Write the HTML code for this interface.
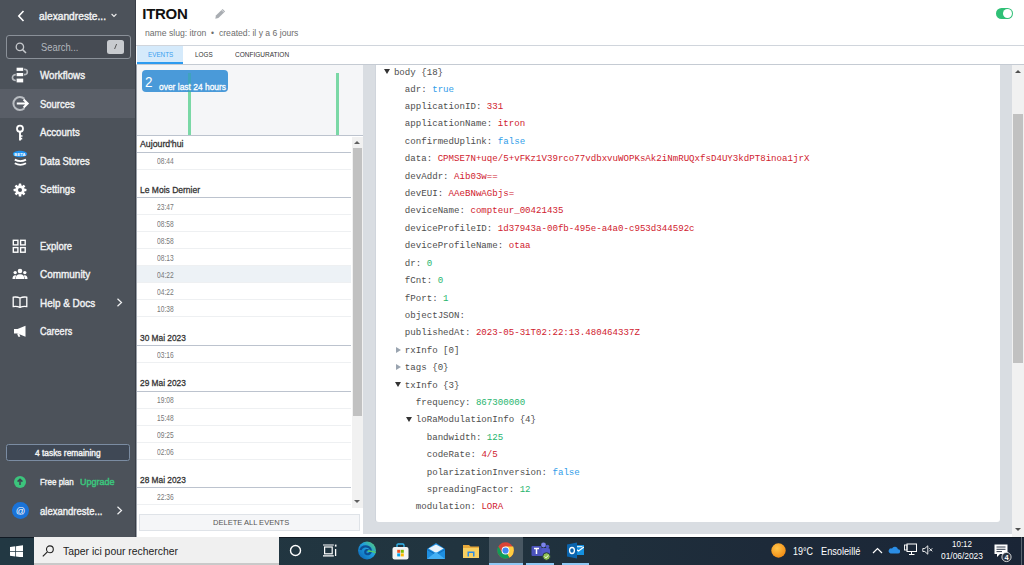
<!DOCTYPE html>
<html><head><meta charset="utf-8"><style>
*{margin:0;padding:0;box-sizing:border-box}
html,body{width:1024px;height:565px;overflow:hidden;background:#fff;font-family:"Liberation Sans",sans-serif}
.a{position:absolute;white-space:nowrap}
.x{position:absolute;white-space:nowrap;transform-origin:0 0}
.mono{position:absolute;white-space:nowrap;font-family:"Liberation Mono",monospace;font-size:9.12px;line-height:12px;color:#4e4e4e}
.s{color:#d0212e}.n{color:#27b56e}.b{color:#2f9de9}
.td{position:absolute;width:0;height:0;border-left:3.9px solid transparent;border-right:3.9px solid transparent;border-top:5.2px solid #333}
.tr{position:absolute;width:0;height:0;border-top:3.7px solid transparent;border-bottom:3.7px solid transparent;border-left:5px solid #9aa4b0}
</style></head><body>
<div class="a" style="left:0px;top:0px;width:136px;height:537px;background:#4c525a;"></div>
<div class="a" style="left:135px;top:0px;width:1px;height:537px;background:#393e47;"></div>
<div class="a" style="left:136px;top:65px;width:1px;height:472px;background:#9aa0a8;"></div>
<div class="a" style="left:0px;top:89px;width:135px;height:29px;background:#595e67;"></div>
<svg class="a" style="left:16.5px;top:10px" width="8" height="12" viewBox="0 0 8 12"><path d="M6.5 1 L1.8 6 L6.5 11" stroke="#fff" stroke-width="1.6" fill="none"/></svg>
<div class="x" style="left:39px;top:8.5px;font-size:11px;line-height:14.3px;color:#f2f3f4;font-weight:normal;transform:scaleX(0.929);-webkit-text-stroke:0.4px #f2f3f4;">alexandreste...</div>
<svg class="a" style="left:111px;top:13px" width="6" height="5" viewBox="0 0 6 5"><path d="M0.6 1 L3 3.4 L5.4 1" stroke="#eee" stroke-width="1.1" fill="none"/></svg>
<div class="a" style="left:5.5px;top:35px;width:125px;height:23.5px;background:#464b53;border:1.8px solid #8a9098;border-radius:3px;"></div>
<svg class="a" style="left:15px;top:42px" width="12" height="12" viewBox="0 0 12 12"><circle cx="4.9" cy="4.9" r="3.7" stroke="#c5c8cc" stroke-width="1.3" fill="none"/><path d="M7.6 7.6 L11 11" stroke="#c5c8cc" stroke-width="1.5"/></svg>
<div class="x" style="left:40.5px;top:40.8px;font-size:10.5px;line-height:13.65px;color:#b4b8be;font-weight:normal;transform:scaleX(0.89);">Search...</div>
<div class="a" style="left:107px;top:39.5px;width:17px;height:14px;background:#c8cbcf;border-radius:2.5px;"></div>
<svg class="a" style="left:112px;top:43px" width="7" height="7" viewBox="0 0 7 7"><path d="M4.6 1 L2.6 6" stroke="#555" stroke-width="1"/></svg>
<div class="x" style="left:39.5px;top:68.3px;font-size:11px;line-height:14.3px;color:#f2f3f4;font-weight:normal;transform:scaleX(0.893);-webkit-text-stroke:0.4px #f2f3f4;">Workflows</div>
<div class="x" style="left:39.5px;top:96.8px;font-size:11px;line-height:14.3px;color:#f2f3f4;font-weight:normal;transform:scaleX(0.859);-webkit-text-stroke:0.4px #f2f3f4;">Sources</div>
<div class="x" style="left:39.5px;top:125.2px;font-size:11px;line-height:14.3px;color:#f2f3f4;font-weight:normal;transform:scaleX(0.879);-webkit-text-stroke:0.4px #f2f3f4;">Accounts</div>
<div class="x" style="left:39.5px;top:153.6px;font-size:11px;line-height:14.3px;color:#f2f3f4;font-weight:normal;transform:scaleX(0.858);-webkit-text-stroke:0.4px #f2f3f4;">Data Stores</div>
<div class="x" style="left:39.5px;top:182px;font-size:11px;line-height:14.3px;color:#f2f3f4;font-weight:normal;transform:scaleX(0.883);-webkit-text-stroke:0.4px #f2f3f4;">Settings</div>
<div class="x" style="left:39.5px;top:239px;font-size:11px;line-height:14.3px;color:#f2f3f4;font-weight:normal;transform:scaleX(0.86);-webkit-text-stroke:0.4px #f2f3f4;">Explore</div>
<div class="x" style="left:39.5px;top:267.4px;font-size:11px;line-height:14.3px;color:#f2f3f4;font-weight:normal;transform:scaleX(0.905);-webkit-text-stroke:0.4px #f2f3f4;">Community</div>
<div class="x" style="left:39.5px;top:295.7px;font-size:11px;line-height:14.3px;color:#f2f3f4;font-weight:normal;transform:scaleX(0.904);-webkit-text-stroke:0.4px #f2f3f4;">Help &amp; Docs</div>
<div class="x" style="left:39.5px;top:324.2px;font-size:11px;line-height:14.3px;color:#f2f3f4;font-weight:normal;transform:scaleX(0.8225);-webkit-text-stroke:0.4px #f2f3f4;">Careers</div>
<svg class="a" style="left:116px;top:298px" width="7" height="9" viewBox="0 0 7 9"><path d="M1.5 0.8 L5.5 4.5 L1.5 8.2" stroke="#f2f3f4" stroke-width="1.2" fill="none"/></svg>
<div class="a" style="left:6px;top:444px;width:124px;height:17px;background:#3f4855;border:1.5px solid #7b8ca2;border-radius:2.5px;"></div>
<div class="x" style="left:34.7px;top:448px;font-size:9px;line-height:11.7px;color:#f2f3f4;font-weight:normal;transform:scaleX(0.93);-webkit-text-stroke:0.4px #f2f3f4;">4 tasks remaining</div>
<div class="a" style="left:14px;top:476px;width:12px;height:12px;background:#3cc47c;border-radius:6px;"></div>
<svg class="a" style="left:14px;top:476px" width="12" height="12" viewBox="0 0 12 12"><path d="M6 9 V3.5 M3.6 5.6 L6 3.2 L8.4 5.6" stroke="#3e4550" stroke-width="1.5" fill="none"/></svg>
<div class="x" style="left:39.8px;top:476px;font-size:9.5px;line-height:12.35px;color:#f2f3f4;font-weight:normal;transform:scaleX(0.84);-webkit-text-stroke:0.4px #f2f3f4;">Free plan</div>
<div class="x" style="left:80.3px;top:476px;font-size:9.5px;line-height:12.35px;color:#3cc47c;font-weight:normal;transform:scaleX(0.944);-webkit-text-stroke:0.5px #3cc47c;">Upgrade</div>
<div class="a" style="left:12px;top:502px;width:16.5px;height:16.5px;background:#1a73d8;border-radius:9px;"></div>
<div class="x" style="left:15.8px;top:504.5px;font-size:9.5px;line-height:12.35px;color:#fff;font-weight:normal;">@</div>
<div class="x" style="left:39.8px;top:503.5px;font-size:11px;line-height:14.3px;color:#f2f3f4;font-weight:normal;transform:scaleX(0.865);-webkit-text-stroke:0.4px #f2f3f4;">alexandreste...</div>
<svg class="a" style="left:116px;top:506px" width="7" height="9" viewBox="0 0 7 9"><path d="M1.5 0.8 L5.5 4.5 L1.5 8.2" stroke="#f2f3f4" stroke-width="1.2" fill="none"/></svg>
<svg class="a" style="left:10px;top:66px" width="20" height="18" viewBox="0 0 20 18"><rect x="6.6" y="1.7" width="6.6" height="3.2" fill="#fff"/><rect x="6.6" y="7" width="6.6" height="3.2" fill="#fff"/><rect x="6.6" y="12.6" width="6.6" height="3.8" fill="#fff"/><path d="M14 3.3 C18.5 3.3 18.5 8.6 14 8.6" stroke="#b5b9be" stroke-width="1.6" fill="none"/><path d="M5.8 8.6 C1.3 8.6 1.3 14.5 5.8 14.5" stroke="#b5b9be" stroke-width="1.6" fill="none"/></svg>
<svg class="a" style="left:11px;top:95px" width="19" height="17" viewBox="0 0 19 17"><path d="M13.4 3.8 A6.5 6.5 0 1 0 13.4 13.2" stroke="#b9bdc2" stroke-width="2" fill="none"/><path d="M5.8 8.5 H16.3 M12.6 4.6 L16.6 8.5 L12.6 12.4" stroke="#fff" stroke-width="2.1" fill="none"/></svg>
<svg class="a" style="left:14px;top:124px" width="12" height="18" viewBox="0 0 12 18"><circle cx="6" cy="4.7" r="3" stroke="#fff" stroke-width="1.8" fill="none"/><path d="M6 7.5 V16.5" stroke="#fff" stroke-width="1.9"/><path d="M6 12 H8.5 M6 14.6 H8.2" stroke="#fff" stroke-width="1.6"/></svg>
<svg class="a" style="left:12px;top:150px" width="16" height="18" viewBox="0 0 16 18"><path d="M2.8 9.6 Q8.4 12.8 14 9.6" stroke="#fff" stroke-width="1.8" fill="none"/><path d="M2.8 13.2 Q8.4 16.4 14 13.2" stroke="#fff" stroke-width="1.8" fill="none"/><ellipse cx="8" cy="4" rx="7.2" ry="3.3" fill="#1f93f2"/><text x="8" y="5.6" font-size="4.3" font-family="Liberation Sans" font-weight="bold" fill="#fff" text-anchor="middle">BETA</text></svg>
<svg class="a" style="left:13px;top:182.5px" width="14" height="14" viewBox="0 0 14 14"><g fill="#fff"><circle cx="7" cy="7" r="4.7"/><rect x="5.7" y="0.6" width="2.6" height="12.8" rx="0.5"/><rect x="5.7" y="0.6" width="2.6" height="12.8" rx="0.5" transform="rotate(45 7 7)"/><rect x="5.7" y="0.6" width="2.6" height="12.8" rx="0.5" transform="rotate(90 7 7)"/><rect x="5.7" y="0.6" width="2.6" height="12.8" rx="0.5" transform="rotate(135 7 7)"/></g><circle cx="7" cy="7" r="2" fill="#4c525a"/></svg>
<svg class="a" style="left:12px;top:239px" width="15" height="15" viewBox="0 0 15 15"><g stroke="#fff" stroke-width="1.4" fill="none"><rect x="1.3" y="1.3" width="4.6" height="4.6"/><rect x="8.6" y="1.3" width="4.6" height="4.6"/><rect x="1.3" y="8.6" width="4.6" height="4.6"/><rect x="8.6" y="8.6" width="4.6" height="4.6"/></g></svg>
<svg class="a" style="left:12px;top:268px" width="16" height="12" viewBox="0 0 16 12"><g fill="#fff"><circle cx="8" cy="3" r="2.3"/><circle cx="3.2" cy="4.6" r="1.7"/><circle cx="12.8" cy="4.6" r="1.7"/><path d="M3.5 11 Q3.5 6.2 8 6.2 Q12.5 6.2 12.5 11 Z"/><path d="M0.5 11 Q0.5 7.3 3.2 7.3 Q4.5 7.3 4.2 8 Q3 9 3 11 Z"/><path d="M15.5 11 Q15.5 7.3 12.8 7.3 Q11.5 7.3 11.8 8 Q13 9 13 11 Z"/></g></svg>
<svg class="a" style="left:12px;top:296px" width="16" height="13" viewBox="0 0 16 13"><path d="M8 2 Q5 0.6 1.2 1.2 V10.6 Q5 10 8 11.4 Q11 10 14.8 10.6 V1.2 Q11 0.6 8 2 Z M8 2 V11.4" stroke="#fff" stroke-width="1.3" fill="none"/></svg>
<svg class="a" style="left:13px;top:325px" width="14" height="13" viewBox="0 0 14 13"><path d="M1 4 H4.5 L12.5 0.8 V11.8 L4.5 8.6 H1 Z" fill="#fff"/><path d="M4 8.6 L5.3 11.8 H7.3 L6.3 8.9" fill="#fff"/></svg>
<div class="x" style="left:142.3px;top:3.7px;font-size:15px;line-height:19.5px;color:#111;font-weight:bold;letter-spacing:-0.3px;">ITRON</div>
<svg class="a" style="left:215px;top:8px" width="11" height="11" viewBox="0 0 11 11"><path d="M0.3 10.7 L0.9 7.6 L7.6 0.9 L10.1 3.4 L3.4 10.1 Z" fill="#a9adb2"/><path d="M6.6 1.9 L9.1 4.4" stroke="#fff" stroke-width="0.6"/></svg>
<div class="x" style="left:145px;top:28px;font-size:8.7px;line-height:11.31px;color:#6d6d6d;font-weight:normal;transform:scaleX(0.992);">name slug: itron &nbsp;•&nbsp; created: il y a 6 jours</div>
<div class="a" style="left:995.5px;top:8px;width:17.5px;height:11px;background:#2fc076;border-radius:6px;"></div>
<div class="a" style="left:1002.8px;top:9px;width:9px;height:9px;background:#fff;border-radius:5px;"></div>
<div class="a" style="left:136px;top:45px;width:888px;height:1px;background:#d0d5dc;"></div>
<div class="a" style="left:137px;top:46px;width:46px;height:16.5px;background:#d5eafb;"></div>
<div class="a" style="left:137px;top:62px;width:46px;height:2px;background:#2d9bf0;"></div>
<div class="a" style="left:136px;top:64px;width:888px;height:1px;background:#c5cbd3;"></div>
<div class="x" style="left:147.6px;top:49.8px;font-size:7.6px;line-height:9.88px;color:#3a9ff0;font-weight:normal;transform:scaleX(0.83);">EVENTS</div>
<div class="x" style="left:195.3px;top:49.8px;font-size:7.6px;line-height:9.88px;color:#333;font-weight:normal;transform:scaleX(0.835);">LOGS</div>
<div class="x" style="left:235.2px;top:49.8px;font-size:7.6px;line-height:9.88px;color:#333;font-weight:normal;transform:scaleX(0.857);">CONFIGURATION</div>
<div class="a" style="left:137px;top:65px;width:226px;height:70.5px;background:#f5f6f8;"></div>
<div class="a" style="left:137px;top:135px;width:226px;height:1px;background:#bcc3ce;"></div>
<div class="a" style="left:142px;top:70.3px;width:86.3px;height:22px;background:#4a9ad9;border-radius:4px;"></div>
<div class="a" style="left:188.3px;top:92.3px;width:2.8px;height:43px;background:#7ad8a6;"></div>
<div class="a" style="left:188.3px;top:73px;width:2.8px;height:19.3px;background:#3fa3bd;"></div>
<div class="a" style="left:336.3px;top:73px;width:2.8px;height:62px;background:#7ad8a6;"></div>
<div class="x" style="left:145.2px;top:72.3px;font-size:15px;line-height:19.5px;color:#fff;font-weight:normal;transform:scaleX(0.9);">2</div>
<div class="x" style="left:159px;top:80.5px;font-size:9.5px;line-height:12.35px;color:#fff;font-weight:normal;transform:scaleX(0.888);-webkit-text-stroke:0.3px #fff;">over last 24 hours</div>
<div class="a" style="left:137px;top:136px;width:226px;height:401px;background:#fff;"></div>
<div class="x" style="left:139.7px;top:138.4px;font-size:9.5px;line-height:12.35px;color:#333;font-weight:normal;transform:scaleX(0.921);-webkit-text-stroke:0.3px #333;">Aujourd&#39;hui</div>
<div class="a" style="left:137px;top:151.8px;width:214px;height:1px;background:#bcc3ce;"></div>
<div class="x" style="left:156.6px;top:157px;font-size:8.2px;line-height:10.66px;color:#777;font-weight:normal;transform:scaleX(0.81);">08:44</div>
<div class="a" style="left:137px;top:168.85px;width:214px;height:1px;background:#eef0f2;"></div>
<div class="x" style="left:139.7px;top:183.8px;font-size:9.5px;line-height:12.35px;color:#333;font-weight:normal;transform:scaleX(0.895);-webkit-text-stroke:0.3px #333;">Le Mois Dernier</div>
<div class="a" style="left:137px;top:197.1px;width:214px;height:1px;background:#bcc3ce;"></div>
<div class="x" style="left:156.6px;top:203px;font-size:8.2px;line-height:10.66px;color:#777;font-weight:normal;transform:scaleX(0.81);">23:47</div>
<div class="a" style="left:137px;top:214.15px;width:214px;height:1px;background:#eef0f2;"></div>
<div class="x" style="left:156.6px;top:220px;font-size:8.2px;line-height:10.66px;color:#777;font-weight:normal;transform:scaleX(0.81);">08:58</div>
<div class="a" style="left:137px;top:231.2px;width:214px;height:1px;background:#eef0f2;"></div>
<div class="x" style="left:156.6px;top:237px;font-size:8.2px;line-height:10.66px;color:#777;font-weight:normal;transform:scaleX(0.81);">08:58</div>
<div class="a" style="left:137px;top:248.25px;width:214px;height:1px;background:#eef0f2;"></div>
<div class="x" style="left:156.6px;top:254px;font-size:8.2px;line-height:10.66px;color:#777;font-weight:normal;transform:scaleX(0.81);">08:13</div>
<div class="a" style="left:137px;top:265.3px;width:214px;height:1px;background:#eef0f2;"></div>
<div class="a" style="left:137px;top:265.8px;width:214px;height:17.05px;background:#edf2f6;"></div>
<div class="x" style="left:156.6px;top:271px;font-size:8.2px;line-height:10.66px;color:#777;font-weight:normal;transform:scaleX(0.81);">04:22</div>
<div class="a" style="left:137px;top:282.35px;width:214px;height:1px;background:#eef0f2;"></div>
<div class="x" style="left:156.6px;top:288px;font-size:8.2px;line-height:10.66px;color:#777;font-weight:normal;transform:scaleX(0.81);">04:22</div>
<div class="a" style="left:137px;top:299.4px;width:214px;height:1px;background:#eef0f2;"></div>
<div class="x" style="left:156.6px;top:305px;font-size:8.2px;line-height:10.66px;color:#777;font-weight:normal;transform:scaleX(0.81);">10:38</div>
<div class="a" style="left:137px;top:316.45px;width:214px;height:1px;background:#eef0f2;"></div>
<div class="x" style="left:139.7px;top:331.6px;font-size:9.5px;line-height:12.35px;color:#333;font-weight:normal;transform:scaleX(0.8775);-webkit-text-stroke:0.3px #333;">30 Mai 2023</div>
<div class="a" style="left:137px;top:345.1px;width:214px;height:1px;background:#bcc3ce;"></div>
<div class="x" style="left:156.6px;top:351px;font-size:8.2px;line-height:10.66px;color:#777;font-weight:normal;transform:scaleX(0.81);">03:16</div>
<div class="a" style="left:137px;top:362.15px;width:214px;height:1px;background:#eef0f2;"></div>
<div class="x" style="left:139.7px;top:376.6px;font-size:9.5px;line-height:12.35px;color:#333;font-weight:normal;transform:scaleX(0.8775);-webkit-text-stroke:0.3px #333;">29 Mai 2023</div>
<div class="a" style="left:137px;top:390.9px;width:214px;height:1px;background:#bcc3ce;"></div>
<div class="x" style="left:156.6px;top:396px;font-size:8.2px;line-height:10.66px;color:#777;font-weight:normal;transform:scaleX(0.81);">19:08</div>
<div class="a" style="left:137px;top:407.95px;width:214px;height:1px;background:#eef0f2;"></div>
<div class="x" style="left:156.6px;top:414px;font-size:8.2px;line-height:10.66px;color:#777;font-weight:normal;transform:scaleX(0.81);">15:48</div>
<div class="a" style="left:137px;top:425.0px;width:214px;height:1px;background:#eef0f2;"></div>
<div class="x" style="left:156.6px;top:431px;font-size:8.2px;line-height:10.66px;color:#777;font-weight:normal;transform:scaleX(0.81);">09:25</div>
<div class="a" style="left:137px;top:442.05px;width:214px;height:1px;background:#eef0f2;"></div>
<div class="x" style="left:156.6px;top:448px;font-size:8.2px;line-height:10.66px;color:#777;font-weight:normal;transform:scaleX(0.81);">02:06</div>
<div class="a" style="left:137px;top:459.1px;width:214px;height:1px;background:#eef0f2;"></div>
<div class="x" style="left:139.7px;top:473.8px;font-size:9.5px;line-height:12.35px;color:#333;font-weight:normal;transform:scaleX(0.8775);-webkit-text-stroke:0.3px #333;">28 Mai 2023</div>
<div class="a" style="left:137px;top:487.2px;width:214px;height:1px;background:#bcc3ce;"></div>
<div class="x" style="left:156.6px;top:493px;font-size:8.2px;line-height:10.66px;color:#777;font-weight:normal;transform:scaleX(0.81);">22:36</div>
<div class="a" style="left:137px;top:504.25px;width:214px;height:1px;background:#eef0f2;"></div>
<div class="a" style="left:352px;top:137px;width:11px;height:371px;background:#f1f1f1;"></div>
<div class="a" style="left:353px;top:148px;width:9px;height:268px;background:#c1c1c1;"></div>
<div class="a" style="left:354px;top:141px;width:0;height:0;border-left:3.5px solid transparent;border-right:3.5px solid transparent;border-bottom:3.5px solid #606060"></div>
<div class="a" style="left:354px;top:500px;width:0;height:0;border-left:3.5px solid transparent;border-right:3.5px solid transparent;border-top:3.5px solid #606060"></div>
<div class="a" style="left:139px;top:514px;width:221.3px;height:16.5px;background:#f5f6f8;border:1px solid #dfe3e8;"></div>
<div class="x" style="left:212.6px;top:517.7px;font-size:8px;line-height:10.4px;color:#555;font-weight:normal;transform:scaleX(0.94);">DELETE ALL EVENTS</div>
<div class="a" style="left:363px;top:65px;width:649px;height:469.3px;background:#d9dde2;"></div>
<div class="a" style="left:376px;top:65px;width:624px;height:456.5px;background:#fff;border-radius:0 0 3px 3px;"></div>
<div class="a" style="left:363px;top:534.3px;width:649px;height:2.7px;background:#fff;"></div>
<div class="a" style="left:374.5px;top:65px;width:1.5px;height:456px;background:#d0d5dc;"></div>
<div class="a" style="left:1012px;top:65px;width:12px;height:472px;background:#f1f1f1;"></div>
<div class="a" style="left:1013px;top:114px;width:9.7px;height:249px;background:#c1c1c1;"></div>
<div class="a" style="left:1014.5px;top:70px;width:0;height:0;border-left:3.5px solid transparent;border-right:3.5px solid transparent;border-bottom:3.5px solid #505050"></div>
<div class="a" style="left:1014.5px;top:528px;width:0;height:0;border-left:3.5px solid transparent;border-right:3.5px solid transparent;border-top:3.5px solid #505050"></div>
<div class="td" style="left:383.80px;top:69.30px"></div>
<div class="mono" style="left:393.90px;top:66.80px">body {18}</div>
<div class="mono" style="left:404.84px;top:83.61px">adr: <span class="b">true</span></div>
<div class="mono" style="left:404.84px;top:101.02px">applicationID: <span class="s">331</span></div>
<div class="mono" style="left:404.84px;top:118.43px">applicationName: <span class="s">itron</span></div>
<div class="mono" style="left:404.84px;top:135.84px">confirmedUplink: <span class="b">false</span></div>
<div class="mono" style="left:404.84px;top:153.25px">data: <span class="s">CPMSE7N+uqe/5+vFKz1V39rco77vdbxvuWOPKsAk2iNmRUQxfsD4UY3kdPT8inoa1jrX</span></div>
<div class="mono" style="left:404.84px;top:170.66px">devAddr: <span class="s">Aib03w==</span></div>
<div class="mono" style="left:404.84px;top:188.07px">devEUI: <span class="s">AAeBNwAGbjs=</span></div>
<div class="mono" style="left:404.84px;top:205.48px">deviceName: <span class="s">compteur_00421435</span></div>
<div class="mono" style="left:404.84px;top:222.89px">deviceProfileID: <span class="s">1d37943a-00fb-495e-a4a0-c953d344592c</span></div>
<div class="mono" style="left:404.84px;top:240.30px">deviceProfileName: <span class="s">otaa</span></div>
<div class="mono" style="left:404.84px;top:257.71px">dr: <span class="n">0</span></div>
<div class="mono" style="left:404.84px;top:275.12px">fCnt: <span class="n">0</span></div>
<div class="mono" style="left:404.84px;top:292.53px">fPort: <span class="n">1</span></div>
<div class="mono" style="left:404.84px;top:309.94px">objectJSON: </div>
<div class="mono" style="left:404.84px;top:327.35px">publishedAt: <span class="s">2023-05-31T02:22:13.480464337Z</span></div>
<div class="tr" style="left:395.84px;top:346.56px"></div>
<div class="mono" style="left:404.84px;top:344.76px">rxInfo [0]</div>
<div class="tr" style="left:395.84px;top:363.97px"></div>
<div class="mono" style="left:404.84px;top:362.17px">tags {0}</div>
<div class="td" style="left:394.74px;top:382.08px"></div>
<div class="mono" style="left:404.84px;top:379.58px">txInfo {3}</div>
<div class="mono" style="left:415.78px;top:396.99px">frequency: <span class="n">867300000</span></div>
<div class="td" style="left:405.68px;top:416.90px"></div>
<div class="mono" style="left:415.78px;top:414.40px">loRaModulationInfo {4}</div>
<div class="mono" style="left:426.72px;top:431.81px">bandwidth: <span class="n">125</span></div>
<div class="mono" style="left:426.72px;top:449.22px">codeRate: <span class="s">4/5</span></div>
<div class="mono" style="left:426.72px;top:466.63px">polarizationInversion: <span class="b">false</span></div>
<div class="mono" style="left:426.72px;top:484.04px">spreadingFactor: <span class="n">12</span></div>
<div class="mono" style="left:415.78px;top:501.45px">modulation: <span class="s">LORA</span></div>
<div class="a" style="left:0px;top:537px;width:1024px;height:28px;background:linear-gradient(90deg,#223843 0%,#21343f 45%,#1d2a39 75%,#1a2536 100%);"></div>
<div class="a" style="left:0px;top:536.5px;width:1024px;height:1px;background:#111a24;"></div>
<svg class="a" style="left:10.3px;top:544.5px" width="13.2" height="12.7" viewBox="0 0 14 13"><path d="M0 1.9 L5.6 1.1 V6.1 H0 Z M6.4 1 L14 0 V6.1 H6.4 Z M0 6.9 H5.6 V11.9 L0 11.1 Z M6.4 6.9 H14 V13 L6.4 12 Z" fill="#fff"/></svg>
<div class="a" style="left:33.7px;top:537px;width:245px;height:27px;background:#f0f0f0;"></div>
<div class="a" style="left:33.7px;top:563.3px;width:245px;height:1.7px;background:#c9c9c9;"></div>
<svg class="a" style="left:42px;top:544.5px" width="13" height="12" viewBox="0 0 13 12"><circle cx="7.9" cy="4.3" r="3.4" stroke="#222" stroke-width="1.1" fill="none"/><path d="M5.4 6.9 L0.8 11.4" stroke="#222" stroke-width="1.2"/></svg>
<div class="x" style="left:62.5px;top:544.5px;font-size:10.5px;line-height:13.65px;color:#222;font-weight:normal;transform:scaleX(0.99);">Taper ici pour rechercher</div>
<svg class="a" style="left:289px;top:544px" width="13" height="13" viewBox="0 0 13 13"><circle cx="6.5" cy="6.5" r="5" stroke="#fff" stroke-width="1.4" fill="none"/></svg>
<svg class="a" style="left:323px;top:544px" width="14" height="13" viewBox="0 0 14 13"><rect x="1.6" y="3" width="7.6" height="6.8" stroke="#fff" stroke-width="1.2" fill="none"/><path d="M0 1 H10.8 M0 11.9 H10.8" stroke="#fff" stroke-width="1.1"/><path d="M12.6 5 V12" stroke="#fff" stroke-width="1.3"/><rect x="11.9" y="0.6" width="1.6" height="2" fill="#fff"/></svg>
<svg class="a" style="left:357.5px;top:541px" width="18" height="19" viewBox="0 0 18 19"><defs><linearGradient id="eg" x1="0" y1="1" x2="1" y2="0"><stop offset="0" stop-color="#0a5fb0"/><stop offset="0.55" stop-color="#1e9de0"/><stop offset="1" stop-color="#5fd36a"/></linearGradient></defs><circle cx="9" cy="9.5" r="9" fill="url(#eg)"/><path d="M2.5 9 C3.5 5.5 7.5 4.5 10.5 6 C13.5 7.5 13.5 11 11.5 12.5 C9.5 14 7 13 7.2 10.8 C7.4 9 9.5 8.6 10.5 9.5" stroke="#0d4f94" stroke-width="2.2" fill="none"/><path d="M9.6 9.9 C14 10 17 11 17.5 12" stroke="#53c96e" stroke-width="1.5" fill="none"/></svg>
<svg class="a" style="left:392px;top:543px" width="17" height="17" viewBox="0 0 17 17"><path d="M5 4 V2.2 Q5 1 6.2 1 H10.8 Q12 1 12 2.2 V4" stroke="#35b8f0" stroke-width="1.3" fill="none"/><rect x="0.5" y="4" width="16" height="12.5" rx="2" fill="#f4f4f4"/><rect x="5.2" y="6.8" width="3" height="3" fill="#f25022"/><rect x="8.8" y="6.8" width="3" height="3" fill="#7fba00"/><rect x="5.2" y="10.4" width="3" height="3" fill="#00a4ef"/><rect x="8.8" y="10.4" width="3" height="3" fill="#ffb900"/></svg>
<svg class="a" style="left:427px;top:543px" width="18" height="16" viewBox="0 0 18 16"><path d="M0 6 L9 0 L18 6 V16 H0 Z" fill="#1e8fe0"/><path d="M0 6 L9 11 L18 6 L18 7 L9 12 L0 7Z" fill="#0f6ab8"/><path d="M1.5 5.5 L9 1.5 L16.5 5.5 L9 10 Z" fill="#e9f3fb"/><path d="M0 16 L9 9 L18 16 Z" fill="#44b0f5"/></svg>
<svg class="a" style="left:463px;top:544px" width="16" height="14" viewBox="0 0 16 14"><path d="M0 1 H6 L7.5 2.5 H16 V14 H0 Z" fill="#e8a93a"/><rect x="0" y="4" width="16" height="10" fill="#f8d061"/><rect x="4.5" y="7.5" width="7" height="5" fill="#2b8ce6"/><rect x="6" y="9" width="4" height="5" fill="#f8d061"/></svg>
<div class="a" style="left:488.5px;top:537px;width:34.5px;height:28px;background:#485762;"></div>
<div class="a" style="left:488.5px;top:563.3px;width:34.5px;height:1.7px;background:#8ec8f4;"></div>
<svg class="a" style="left:497px;top:542px" width="17" height="17" viewBox="0 0 17 17"><circle cx="8.5" cy="8.5" r="8.2" fill="#db4437"/><path d="M8.5 8.5 L1.4 12.6 A8.2 8.2 0 0 0 12.6 15.6 Z" fill="#0f9d58"/><path d="M8.5 8.5 L12.6 15.6 A8.2 8.2 0 0 0 16.7 8.5 L8.5 4.4 Z" fill="#ffcd40"/><path d="M8.5 4.4 H16.2 A8.2 8.2 0 0 1 16.7 8.5 L12.6 15.6 L8.5 8.5Z" fill="#ffcd40"/><path d="M1.4 12.6 A8.2 8.2 0 0 1 1.4 4.4 L5 10.5 Z" fill="#0f9d58"/><circle cx="8.5" cy="8.5" r="3.9" fill="#fff"/><circle cx="8.5" cy="8.5" r="3.1" fill="#4285f4"/></svg>
<div class="a" style="left:526.3px;top:563.3px;width:28px;height:1.7px;background:#8ec8f4;"></div>
<svg class="a" style="left:531px;top:542px" width="20" height="19" viewBox="0 0 20 19"><circle cx="12.5" cy="3" r="2.4" fill="#7b83eb"/><circle cx="16.5" cy="4.5" r="1.8" fill="#5059c9"/><rect x="9" y="6" width="10" height="8" rx="2" fill="#5059c9"/><rect x="0.5" y="4" width="10" height="10" rx="1" fill="#4b53bc"/><path d="M3 6.5 H8 M5.5 6.5 V12" stroke="#fff" stroke-width="1.5"/><circle cx="15.5" cy="14.5" r="3.8" fill="#92c353" stroke="#213540" stroke-width="1"/><path d="M13.8 14.6 L15 15.8 L17.2 13.4" stroke="#fff" stroke-width="1" fill="none"/></svg>
<div class="a" style="left:561.5px;top:563.3px;width:27.5px;height:1.7px;background:#8ec8f4;"></div>
<svg class="a" style="left:567px;top:542px" width="17" height="17" viewBox="0 0 17 17"><rect x="6" y="3" width="11" height="10" fill="#1490df"/><path d="M6 5 L11.5 9 L17 5" stroke="#fff" stroke-width="1.1" fill="none"/><rect x="7.5" y="4.2" width="8" height="1" fill="#fff"/><path d="M0 2.5 L10 0.5 V16.5 L0 14.5 Z" fill="#0a64ad"/><ellipse cx="5" cy="8.5" rx="2.4" ry="3" stroke="#fff" stroke-width="1.3" fill="none"/></svg>
<svg class="a" style="left:771px;top:543px" width="15" height="15" viewBox="0 0 15 15"><defs><radialGradient id="sg" cx="0.4" cy="0.35" r="0.7"><stop offset="0" stop-color="#ffc54a"/><stop offset="1" stop-color="#f28a12"/></radialGradient></defs><circle cx="7.5" cy="7.5" r="7.2" fill="url(#sg)"/></svg>
<div class="x" style="left:793px;top:545px;font-size:10.5px;line-height:13.65px;color:#fff;font-weight:normal;transform:scaleX(0.85);">19°C</div>
<div class="x" style="left:820.6px;top:545px;font-size:10.5px;line-height:13.65px;color:#fff;font-weight:normal;transform:scaleX(0.876);">Ensoleillé</div>
<svg class="a" style="left:871.5px;top:547px" width="11" height="7" viewBox="0 0 11 7"><path d="M1 6 L5.5 1.5 L10 6" stroke="#fff" stroke-width="1.2" fill="none"/></svg>
<svg class="a" style="left:888px;top:545px" width="12" height="9" viewBox="0 0 12 9"><path d="M2.5 8.5 H10 A2 2 0 0 0 10 4.3 A3.2 3.2 0 0 0 4 3.5 A2.5 2.5 0 0 0 2.5 8.5 Z" fill="#2b8ee6"/></svg>
<svg class="a" style="left:904px;top:543px" width="13" height="13" viewBox="0 0 13 13"><rect x="3" y="1" width="9.5" height="7.5" stroke="#fff" stroke-width="1" fill="none"/><path d="M7.5 8.5 V11 M5 11.5 H10.5" stroke="#fff" stroke-width="1"/><rect x="0.5" y="2" width="2.5" height="5" stroke="#fff" stroke-width="0.9" fill="none"/></svg>
<svg class="a" style="left:922px;top:545px" width="11" height="10" viewBox="0 0 11 10"><path d="M0.8 3.5 H2.8 L5.8 0.8 V9.2 L2.8 6.5 H0.8 Z" stroke="#fff" stroke-width="0.9" fill="none"/><path d="M7.3 3.3 L10.3 6.3 M10.3 3.3 L7.3 6.3" stroke="#fff" stroke-width="0.9"/></svg>
<div class="x" style="left:952px;top:538.3px;font-size:9.3px;line-height:12.09px;color:#fff;font-weight:normal;transform:scaleX(0.86);">10:12</div>
<div class="x" style="left:940.5px;top:550.3px;font-size:9.3px;line-height:12.09px;color:#fff;font-weight:normal;transform:scaleX(0.9);">01/06/2023</div>
<svg class="a" style="left:994px;top:543.5px" width="20" height="19" viewBox="0 0 20 19"><path d="M0.5 0.5 H13.5 V10 H6 L3 13 V10 H0.5 Z" fill="#fff"/><path d="M2.5 3 H11.5 M2.5 5.3 H11.5 M2.5 7.6 H8" stroke="#1a2536" stroke-width="0.9"/><circle cx="12.5" cy="13" r="4.6" fill="#2b3440" stroke="#e8e8e8" stroke-width="0.9"/><text x="12.5" y="15.8" font-size="7.5" font-family="Liberation Sans" font-weight="bold" fill="#fff" text-anchor="middle">4</text></svg>
<div class="a" style="left:1021px;top:537px;width:1px;height:28px;background:#5a6570;"></div>
</body></html>
